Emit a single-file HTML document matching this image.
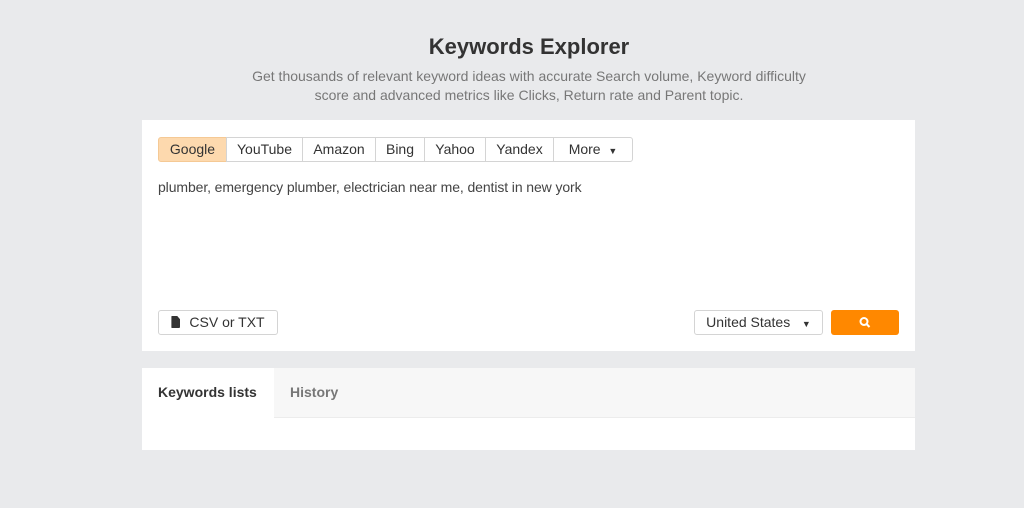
<!DOCTYPE html><html><head><style>
body{margin:0;width:1024px;height:508px;background:#e9eaec;font-family:"Liberation Sans",sans-serif;position:relative;overflow:hidden}
.a{position:absolute}
h1{position:absolute;top:34px;left:0;width:1058px;text-align:center;margin:0;font-size:22px;color:#333;font-weight:bold}
.sub{top:67px;left:0;width:1058px;text-align:center;font-size:14px;line-height:19px;color:#777}
.card{background:#fff;left:142px;width:773px}
.b{position:absolute;top:137px;border:1px solid #d4d4d4;box-sizing:border-box;height:25px;font-size:14px;color:#333;text-align:center;line-height:23px;background:#fff}
</style></head><body>
<h1>Keywords Explorer</h1>
<div class="a sub">Get thousands of relevant keyword ideas with accurate Search volume, Keyword difficulty<br>score and advanced metrics like Clicks, Return rate and Parent topic.</div>
<div class="a card" style="top:120px;height:231px"></div>
<div class="b" style="left:158px;width:69px;background:#fdd9ae;border-color:#f5c995;border-radius:3px 0 0 3px">Google</div>
<div class="b" style="left:226px;width:77px">YouTube</div>
<div class="b" style="left:302px;width:74px">Amazon</div>
<div class="b" style="left:375px;width:50px">Bing</div>
<div class="b" style="left:424px;width:62px">Yahoo</div>
<div class="b" style="left:485px;width:69px">Yandex</div>
<div class="b" style="left:553px;width:80px;border-radius:0 3px 3px 0">More &nbsp;<span style="font-size:9px">▼</span></div>
<div class="a" style="left:158px;top:179px;font-size:14px;color:#444;letter-spacing:-0.1px">plumber, emergency plumber, electrician near me, dentist in new york</div>
<div class="b" style="left:158px;top:310px;width:120px;border-radius:3px"><span style="display:inline-block;width:9px;height:12px;background:#333;vertical-align:-1px;margin-right:9px;border-radius:1px;clip-path:polygon(0 0,65% 0,100% 30%,100% 100%,0 100%)"></span>CSV or TXT</div>
<div class="b" style="left:694px;top:310px;width:129px;border-radius:3px">United States &nbsp; <span style="font-size:9px">▼</span></div>
<div class="a" style="left:831px;top:310px;width:68px;height:25px;background:#ff8800;border-radius:3px"><svg width="68" height="25"><circle cx="33" cy="11.5" r="3.5" fill="none" stroke="#fff" stroke-width="2"/><path d="M35.5 14l3 3" stroke="#fff" stroke-width="2"/></svg></div>
<div class="a card" style="top:368px;height:82px"></div>
<div class="a" style="left:274px;top:368px;width:641px;height:50px;background:#f7f7f7;border-bottom:1px solid #ececec;box-sizing:border-box"></div>
<div class="a" style="left:158px;top:384px;font-size:14px;font-weight:bold;color:#333">Keywords lists</div>
<div class="a" style="left:290px;top:384px;font-size:14px;font-weight:bold;color:#777">History</div>
</body></html>
